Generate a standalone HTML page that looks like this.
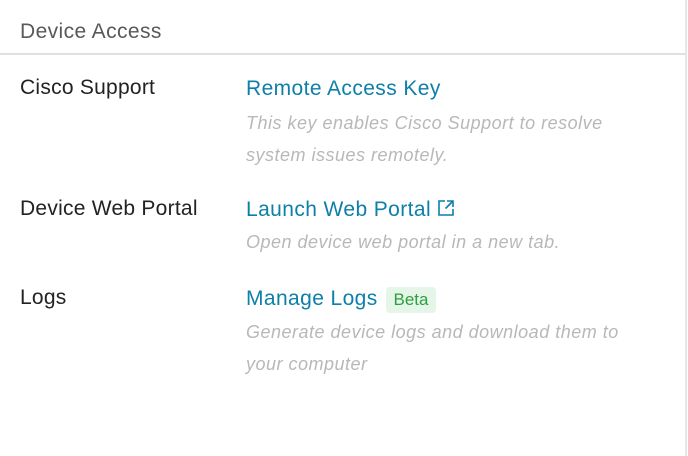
<!DOCTYPE html>
<html><head><style>
body{margin:0;width:688px;height:456px;background:#fff;position:relative;overflow:hidden;font-family:"Liberation Sans",sans-serif}
.a{position:absolute;white-space:nowrap;line-height:24px}
.h{font-size:21px;letter-spacing:0.4px;color:#58595b;left:20px;top:20px}
.l{font-size:21px;letter-spacing:0.25px;color:#222;left:20px}
.k{font-size:21px;letter-spacing:0.4px;color:#0d7fa8;left:246px}
.d{position:absolute;left:246px;font-size:18px;letter-spacing:0.5px;font-style:italic;color:#b8b8b8;line-height:32px;width:420px}
.hr{position:absolute;left:0;top:53px;width:686px;height:2px;background:#e0e0e0}
.vr{position:absolute;left:685px;top:0;width:2px;height:456px;background:#e6e6e6}
.b{position:absolute;left:386px;top:287px;width:50px;height:26px;background:#e5f6e8;border-radius:4px;color:#2e9e3e;font-size:17px;line-height:26px;text-align:center}
</style></head><body>
<div class="a h">Device Access</div>
<div class="hr"></div><div class="vr"></div>
<div class="a l" style="top:76px">Cisco Support</div>
<div class="a k" style="top:77px">Remote Access Key</div>
<div class="d" style="top:107px">This key enables Cisco Support to resolve<br>system issues remotely.</div>
<div class="a l" style="top:197px">Device Web Portal</div>
<div class="a k" style="top:198px">Launch Web Portal <svg width="18" height="18" viewBox="0 0 18 18" style="vertical-align:-1px" fill="none" stroke="#0d7fa8" stroke-width="1.6"><path d="M8 2H2v14h14v-6"/><path d="M10 2h6v6M16 2L8.5 9.5"/></svg></div>
<div class="d" style="top:226px">Open device web portal in a new tab.</div>
<div class="a l" style="top:286px">Logs</div>
<div class="a k" style="top:287px">Manage Logs</div>
<div class="b">Beta</div>
<div class="d" style="top:316px">Generate device logs and download them to<br>your computer</div>
</body></html>
